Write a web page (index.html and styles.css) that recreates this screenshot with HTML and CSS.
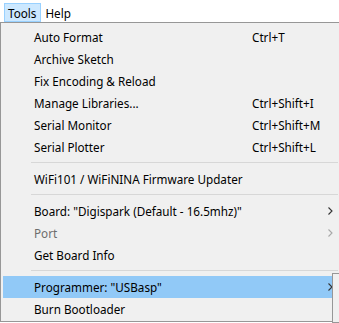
FILE: index.html
```html
<!DOCTYPE html>
<html lang="ko">
<head>
    <meta charset="UTF-8">
    <meta name="viewport" content="width=device-width, initial-scale=1.0">
    <title>Tools</title>
    <link rel="stylesheet" href="styles.css">
</head>
<body>
    <div class="menubar">
        <span class="menubar-item active">Tools</span>
        <span class="menubar-item">Help</span>
    </div>
    <div class="workspace">
        <div class="editor-edge"><div class="toolbar-edge"></div></div>
        <ul class="menu">
            <li class="item"><span>Auto Format</span><span class="shortcut">Ctrl+T</span></li>
            <li class="item"><span>Archive Sketch</span></li>
            <li class="item"><span>Fix Encoding &amp; Reload</span></li>
            <li class="item"><span>Manage Libraries...</span><span class="shortcut">Ctrl+Shift+I</span></li>
            <li class="item"><span>Serial Monitor</span><span class="shortcut">Ctrl+Shift+M</span></li>
            <li class="item"><span>Serial Plotter</span><span class="shortcut">Ctrl+Shift+L</span></li>
            <li class="separator"></li>
            <li class="item"><span>WiFi101 / WiFiNINA Firmware Updater</span></li>
            <li class="separator"></li>
            <li class="item has-sub"><span>Board: "Digispark (Default - 16.5mhz)"</span><span class="shortcut"></span><svg class="arrow" width="5" height="8" viewBox="0 0 5 8"><path d="M0.5 0.5 L4 4 L0.5 7.5" fill="none" stroke="currentColor" stroke-width="1.1"/></svg></li>
            <li class="item has-sub disabled"><span>Port</span><span class="shortcut"></span><svg class="arrow" width="5" height="8" viewBox="0 0 5 8"><path d="M0.5 0.5 L4 4 L0.5 7.5" fill="none" stroke="currentColor" stroke-width="1.1"/></svg></li>
            <li class="item"><span>Get Board Info</span></li>
            <li class="separator"></li>
            <li class="item has-sub selected"><span>Programmer: "USBasp"</span><span class="shortcut"></span><svg class="arrow" width="5" height="8" viewBox="0 0 5 8"><path d="M0.5 0.5 L4 4 L0.5 7.5" fill="none" stroke="currentColor" stroke-width="1.1"/></svg></li>
            <li class="item"><span>Burn Bootloader</span></li>
        </ul>
        <div class="submenu"></div>
    </div>
</body>
</html>
```

FILE: styles.css
```css
* {
    box-sizing: border-box;
}
body {
    margin: 0;
    width: 339px;
    height: 323px;
    overflow: hidden;
    background: #ffffff;
    font-family: "Noto Sans", "Noto Sans CJK KR", sans-serif;
    font-size: 11.7px;
    color: #000000;
    position: relative;
}
.menubar {
    display: flex;
    height: 22px;
    padding: 3px 0 0 4px;
    background: #ffffff;
}
.menubar-item {
    padding: 0 4px 0 3px;
    line-height: 18px;
    height: 19px;
    border: 1px solid transparent;
}
.menubar-item.active {
    background: #cce8ff;
    border-color: #99d1ff;
}
.workspace {
    display: flex;
}
.editor-edge {
    width: 1px;
    height: 301px;
    background: #f4f4f4;
}
.toolbar-edge {
    height: 68px;
    background: #17a1a5;
}
.menu {
    list-style: none;
    margin: 0;
    width: 345px;
    height: 300px;
    flex-shrink: 0;
    padding: 3px 2px 0 2px;
    background: #f0f0f0;
    border: 1px solid #979797;
}
.item {
    display: grid;
    grid-template-columns: 218px 74px 1fr;
    align-items: center;
    height: 22px;
    padding-left: 31px;
    white-space: nowrap;
}
.item.selected {
    background: #91c9f7;
}
.item.disabled {
    color: #6d6d6d;
}
.arrow {
    margin-left: 2px;
    color: #333333;
}
.item.disabled .arrow {
    color: #a8a8a8;
}
.separator {
    height: 10px;
    padding-top: 4px;
    margin: 0 4px 0 28px;
}
.separator::before {
    content: "";
    display: block;
    height: 1px;
    background: #d7d7d7;
}
.submenu {
    position: absolute;
    left: 332px;
    top: 273px;
    width: 20px;
    height: 50px;
    background: #f0f0f0;
    border: 1px solid #979797;
}
```
